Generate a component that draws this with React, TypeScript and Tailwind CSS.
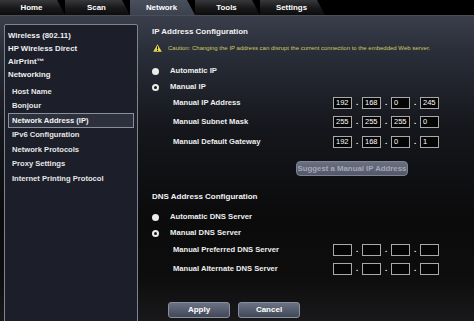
import React from "react";

const tabs = ["Home", "Scan", "Network", "Tools", "Settings"];

const topItems = ["Wireless (802.11)", "HP Wireless Direct", "AirPrint™", "Networking"];

const subItems = [
  "Host Name",
  "Bonjour",
  "Network Address (IP)",
  "IPv6 Configuration",
  "Network Protocols",
  "Proxy Settings",
  "Internet Printing Protocol",
];

function Radio({ checked, label }: { checked?: boolean; label: string }) {
  return (
    <div className="flex h-[14px] items-center">
      <div className="flex h-[7px] w-[7px] items-center justify-center rounded-full bg-[#ececec]">
        {checked && <div className="h-[3px] w-[3px] rounded-full bg-[#1a1a1a]" />}
      </div>
      <span className="ml-[11px] text-[7.7px] font-bold text-[#eeeeee]">{label}</span>
    </div>
  );
}

function IpRow({ label, values }: { label: string; values: string[] }) {
  return (
    <div className="flex h-[14px] items-center pl-[21px]">
      <span className="w-[160px] text-[7.6px] font-bold text-[#eeeeee]">{label}</span>
      <div className="flex items-center">
        {values.map((v, i) => (
          <div key={i} className="flex items-center">
            {i > 0 && (
              <span className="w-[10px] text-center text-[8px] font-bold leading-none text-white">.</span>
            )}
            <div className="flex h-[12px] w-[19px] items-center border border-[#a9a9a9] bg-[#050505] pl-[2px] text-[7.5px] text-white">
              {v}
            </div>
          </div>
        ))}
      </div>
    </div>
  );
}

export default function App() {
  return (
    <div className="flex h-[321px] w-[474px] flex-col overflow-hidden bg-black font-['Liberation_Sans',Arial,sans-serif]">
      {/* Tabs */}
      <div className="flex h-[15px] flex-none bg-black">
        {tabs.map((t) => (
          <div
            key={t}
            className={`flex h-full w-[65px] items-center justify-center pr-[2px] text-[7.9px] font-bold text-white [clip-path:polygon(0_0,57px_0,65px_100%,0_100%)] ${
              t === "Network"
                ? "bg-[linear-gradient(to_bottom,#4a4f5c,#3c4150)]"
                : "bg-[linear-gradient(to_bottom,#38383c,#18181a_55%,#0d0d0e)]"
            }`}
          >
            {t}
          </div>
        ))}
      </div>

      {/* Body */}
      <div className="flex flex-1 border-t border-[#4a4e59] bg-[linear-gradient(to_bottom,#3b3f4c_0px,#2a2e39_35px,#15171c_110px,#0b0b0c_200px,#0d0d0e_260px,#19191b_306px)] pl-[4px]">
        {/* Sidebar */}
        <div className="mt-[8px] h-[320px] w-[134px] flex-none rounded-t-[2px] border border-[#80848d] bg-[#1c1e2a] pt-[4px]">
          {topItems.map((t) => (
            <div key={t} className="h-[13px] pl-[3px] text-[7.8px] font-bold leading-[13px] text-[#f0f0f0]">
              {t}
            </div>
          ))}
          <div className="mt-[3px]">
            {subItems.map((t) => {
              const active = t === "Network Address (IP)";
              return (
                <div
                  key={t}
                  className={`mx-[3px] flex h-[14.5px] items-center border pl-[3px] text-[7.6px] font-bold ${
                    active
                      ? "border-[#8b8f99] bg-[#2d313d] text-[#f4f4f4]"
                      : "border-transparent text-[#e6e6e6]"
                  }`}
                >
                  {t}
                </div>
              );
            })}
          </div>
        </div>

        {/* Content */}
        <div className="ml-[14px] flex flex-1 flex-col pt-[10px]">
          <div className="h-[12px] text-[8px] font-bold leading-[12px] text-[#f2f2f2]">IP Address Configuration</div>

          <div className="mt-[4px] flex h-[12px] items-center">
            <svg width="9" height="8" viewBox="0 0 9 8" className="ml-[1px]">
              <path d="M4.5 0.3 L8.8 7.7 L0.2 7.7 Z" fill="#e3d94a" />
              <rect x="4" y="2.4" width="1" height="3" fill="#111" />
              <rect x="4" y="6" width="1" height="1" fill="#111" />
            </svg>
            <span className="ml-[6px] text-[6px] text-[#d2c865]">
              Caution: Changing the IP address can disrupt the current connection to the embedded Web server.
            </span>
          </div>

          <div className="mt-[10px]">
            <Radio label="Automatic IP" />
          </div>
          <div className="mt-[2px]">
            <Radio checked label="Manual IP" />
          </div>

          <div className="mt-[2px]">
            <IpRow label="Manual IP Address" values={["192", "168", "0", "245"]} />
          </div>
          <div className="mt-[5px]">
            <IpRow label="Manual Subnet Mask" values={["255", "255", "255", "0"]} />
          </div>
          <div className="mt-[6px]">
            <IpRow label="Manual Default Gateway" values={["192", "168", "0", "1"]} />
          </div>

          <div className="ml-[144px] mt-[12px] flex h-[15px] w-[112px] items-center justify-center whitespace-nowrap rounded-[4px] border border-[#7d8393] bg-[linear-gradient(to_bottom,#6a7080,#525868)] text-[7.8px] font-bold text-[#a3a9b8]">
            Suggest a Manual IP Address
          </div>

          <div className="mt-[15px] h-[12px] text-[8px] font-bold leading-[12px] text-[#f2f2f2]">DNS Address Configuration</div>

          <div className="mt-[7px]">
            <Radio label="Automatic DNS Server" />
          </div>
          <div className="mt-[2px]">
            <Radio checked label="Manual DNS Server" />
          </div>

          <div className="mt-[3px]">
            <IpRow label="Manual Preferred DNS Server" values={["", "", "", ""]} />
          </div>
          <div className="mt-[5px]">
            <IpRow label="Manual Alternate DNS Server" values={["", "", "", ""]} />
          </div>

          <div className="ml-[16px] mt-[26px] flex gap-[8px]">
            <button className="h-[16px] w-[62px] rounded-[3px] border border-[#8890a0] bg-[linear-gradient(to_bottom,#6a7284,#414858)] text-[8px] font-bold text-white">
              Apply
            </button>
            <button className="h-[16px] w-[62px] rounded-[3px] border border-[#8890a0] bg-[linear-gradient(to_bottom,#6a7284,#414858)] text-[8px] font-bold text-white">
              Cancel
            </button>
          </div>
        </div>
      </div>
    </div>
  );
}
